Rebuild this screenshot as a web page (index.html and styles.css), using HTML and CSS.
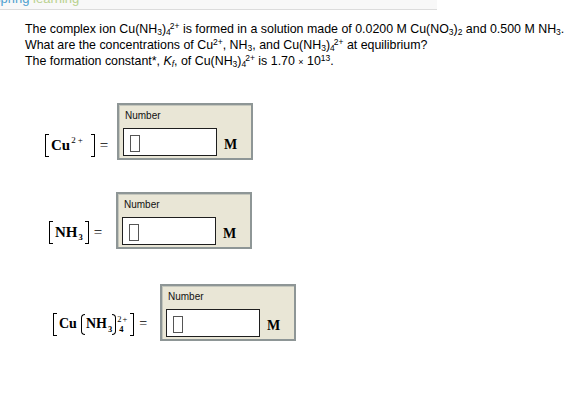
FILE: index.html
```html
<!DOCTYPE html>
<html>
<head>
<meta charset="utf-8">
<link rel="stylesheet" href="styles.css">
</head>
<body>
<div class="topbar"><span class="logo"><span class="lg-a">spring</span> <span class="lg-b">learning</span></span></div>
<div class="question">
  <div class="qline">The complex ion Cu(NH<sub>3</sub>)<sub>4</sub><sup class="pull">2+</sup> is formed in a solution made of 0.0200 M Cu(NO<sub>3</sub>)<sub>2</sub> and 0.500 M NH<sub>3</sub>.</div>
  <div class="qline">What are the concentrations of Cu<sup>2+</sup>, NH<sub>3</sub>, and Cu(NH<sub>3</sub>)<sub>4</sub><sup class="pull">2+</sup> at equilibrium?</div>
  <div class="qline">The formation constant*, <i>K</i><sub><i>f</i></sub>, of Cu(NH<sub>3</sub>)<sub>4</sub><sup class="pull">2+</sup> is 1.70 <span class="times">×</span> 10<sup>13</sup>.</div>
</div>

<div class="row row1">
  <div class="label">
    <span class="bl"></span><span class="chem">Cu</span><span class="csup">2+</span><span class="brr"></span><span class="eq">=</span>
  </div>
  <div class="answer">
    <div class="num">Number</div>
    <div class="field"><div class="input"><span class="caret"></span></div><span class="unit">M</span></div>
  </div>
</div>

<div class="row row2">
  <div class="label">
    <span class="bl"></span><span class="chem">NH</span><span class="csub">3</span><span class="brr"></span><span class="eq">=</span>
  </div>
  <div class="answer">
    <div class="num">Number</div>
    <div class="field"><div class="input"><span class="caret"></span></div><span class="unit">M</span></div>
  </div>
</div>

<div class="row row3">
  <div class="label">
    <span class="bl"></span><span class="chem">Cu</span><span class="pl"></span><span class="chem">NH</span><span class="csub">3</span><span class="pr"></span><span class="stack"><span class="s-up">2+</span><span class="s-dn">4</span></span><span class="brr"></span><span class="eq">=</span>
  </div>
  <div class="answer">
    <div class="num">Number</div>
    <div class="field"><div class="input"><span class="caret"></span></div><span class="unit">M</span></div>
  </div>
</div>
</body>
</html>
```
FILE: styles.css
```css
html, body {
  margin: 0;
  padding: 0;
  background: #ffffff;
}
body {
  font-family: "Liberation Sans", Arial, sans-serif;
  color: #000;
  width: 580px;
  height: 411px;
  overflow: hidden;
}
.topbar {
  width: 437px;
  height: 9px;
  background: #f8f8f8;
  border-bottom: 1px solid #dcdcdc;
  overflow: hidden;
}
.logo {
  display: block;
  font-family: "Liberation Sans", Arial, sans-serif;
  font-size: 13px;
  line-height: 13px;
  margin-top: -8px;
  margin-left: -6px;
  white-space: nowrap;
}
.lg-a { color: #4f9fcf; }
.lg-b { color: #b9d28e; }

.question {
  margin-top: 11px;
  padding-left: 25px;
  font-size: 12.4px;
  line-height: 16px;
}
.qline { white-space: nowrap; }
.question sub, .question sup {
  font-size: 8.5px;
  line-height: 0;
}
.question sub { vertical-align: -2px; }
.question sup { vertical-align: 4px; }
.question .pull { margin-left: -1px; }
.times { font-size: 9px; }

.row {
  display: flex;
  align-items: flex-end;
}
.row1 { margin-top: 33px; padding-left: 45px; }
.row2 { margin-top: 32px; padding-left: 49px; }
.row3 { margin-top: 35px; padding-left: 53px; }

.label {
  flex: none;
  display: flex;
  align-items: center;
  height: 24px;
  margin-bottom: 5px;
  font-family: "Liberation Serif", "Times New Roman", serif;
  font-size: 15px;
}
.row1 .label { width: 72px; margin-bottom: 3px; }
.row2 .label { width: 67px; }
.row3 .label { width: 107px; font-size: 14px; }
.bl, .brr {
  display: inline-block;
  flex: none;
  width: 3px;
  height: 21px;
  border: 1.4px solid #000;
}
.bl { border-right: none; margin-right: 2px; }
.brr { border-left: none; margin-left: 2px; }
.row1 .brr { margin-left: 6px; }
.chem { font-weight: bold; }
.csup {
  font-size: 9px;
  letter-spacing: 2px;
  align-self: flex-start;
  margin-top: 2px;
  margin-left: 1px;
}
.csub {
  font-size: 8.5px;
  font-weight: bold;
  align-self: flex-end;
  margin-bottom: 2px;
  margin-left: 1px;
}
.pl, .pr {
  display: inline-block;
  flex: none;
  width: 3px;
  height: 19px;
  border: 1.2px solid #000;
}
.pl { border-right: none; border-radius: 4px 0 0 4px; margin: 0 1px 0 4px; }
.pr { border-left: none; border-radius: 0 4px 4px 0; margin-left: 0; }
.stack {
  display: inline-flex;
  flex-direction: column;
  font-size: 8.5px;
  line-height: 10px;
  margin-left: 1px;
}
.s-up { letter-spacing: 1px; }
.s-dn { font-weight: bold; padding-left: 2px; }
.row3 .brr { margin-left: 2px; }
.eq { margin-left: 5px; }
.row3 .eq { margin-left: 5px; }

.answer {
  flex: none;
  width: 124px;
  background: #e9e6d6;
  border: 2px solid #8e9696;
  box-shadow: inset 1px 1px 0 #c4c6bc;
  padding: 4px 4px 2px 4px;
}
.num {
  font-size: 10px;
  line-height: 14px;
  padding-left: 2px;
  color: #111;
  margin-bottom: 5px;
}
.field {
  display: flex;
  align-items: center;
}
.input {
  width: 92px;
  height: 26px;
  background: #ffffff;
  border: 1px solid #1e1e1e;
  display: flex;
  align-items: center;
}
.caret {
  display: inline-block;
  width: 8px;
  height: 15px;
  border: 1px solid #555;
  margin-left: 6px;
  margin-top: 2px;
}
.unit {
  font-family: "Liberation Serif", "Times New Roman", serif;
  font-weight: bold;
  font-size: 14px;
  margin-left: 7px;
  margin-top: 6px;
}
```
